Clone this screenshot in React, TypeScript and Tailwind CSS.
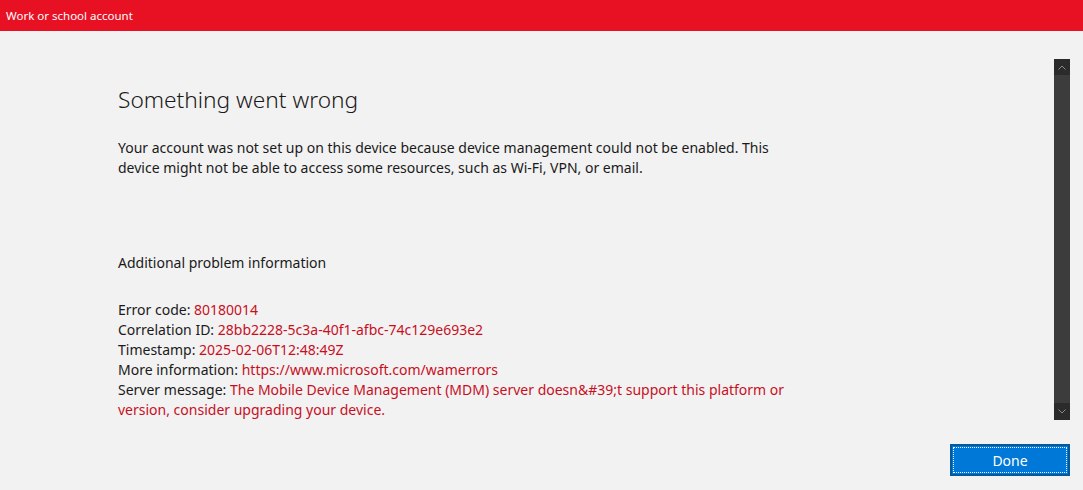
import React from 'react'

const red = 'text-[#c80f1e]'

function Row({ label, value }: { label: string; value: string }) {
  return (
    <div>
      {label} <span className={red}>{value}</span>
    </div>
  )
}

export default function App() {
  return (
    <div className="h-[490px] w-[1083px] bg-[#f2f2f2] flex flex-col overflow-hidden font-['Noto_Sans',sans-serif] text-[#1a1a1a]">
      {/* Title bar */}
      <div className="h-[31px] bg-[#e81123] flex items-center pl-[6px] text-white text-[11.5px]">
        Work or school account
      </div>

      {/* Main area */}
      <div className="h-[389px] flex pt-[28px]">
        <div className="flex-1 pl-[118px] pt-[27px] text-[14px] leading-[20px]">
          <h1 className="text-[22.7px] font-light leading-[28px] mb-[24px]">Something went wrong</h1>
          <p>
            Your account was not set up on this device because device management could not be enabled. This
            <br />
            device might not be able to access some resources, such as Wi-Fi, VPN, or email.
          </p>
          <p className="mt-[75px]">Additional problem information</p>
          <div className="mt-[27px]">
            <Row label="Error code:" value="80180014" />
            <Row label="Correlation ID:" value="28bb2228-5c3a-40f1-afbc-74c129e693e2" />
            <Row label="Timestamp:" value="2025-02-06T12:48:49Z" />
            <Row label="More information:" value="https://www.microsoft.com/wamerrors" />
            <div>
              Server message:{' '}
              <span className={red}>
                The Mobile Device Management (MDM) server doesn&amp;#39;t support this platform or
              </span>
              <br />
              <span className={red}>version, consider upgrading your device.</span>
            </div>
          </div>
        </div>

        {/* Scrollbar */}
        <div className="w-[16px] h-[361px] mr-[13px] bg-[#3c3c3c] flex flex-col justify-between">
          <div className="h-[16px] bg-[#2b2b2b] flex items-center justify-center">
            <svg width="8" height="5" viewBox="0 0 8 5" fill="none" stroke="#8a8a8a" strokeWidth="1">
              <path d="M0.5 4.5 L4 1 L7.5 4.5" />
            </svg>
          </div>
          <div className="h-[17px] bg-[#2b2b2b] flex items-center justify-center">
            <svg width="8" height="5" viewBox="0 0 8 5" fill="none" stroke="#8a8a8a" strokeWidth="1">
              <path d="M0.5 0.5 L4 4 L7.5 0.5" />
            </svg>
          </div>
        </div>
      </div>

      {/* Footer */}
      <div className="flex justify-end pr-[13px] pt-[24px]">
        <button className="w-[120px] h-[32px] bg-[#0078d7] border-2 border-[#005a9e] p-[1px]">
          <div className="w-full h-full border border-dotted border-white flex items-center justify-center text-white text-[14px]">
            Done
          </div>
        </button>
      </div>
    </div>
  )
}
